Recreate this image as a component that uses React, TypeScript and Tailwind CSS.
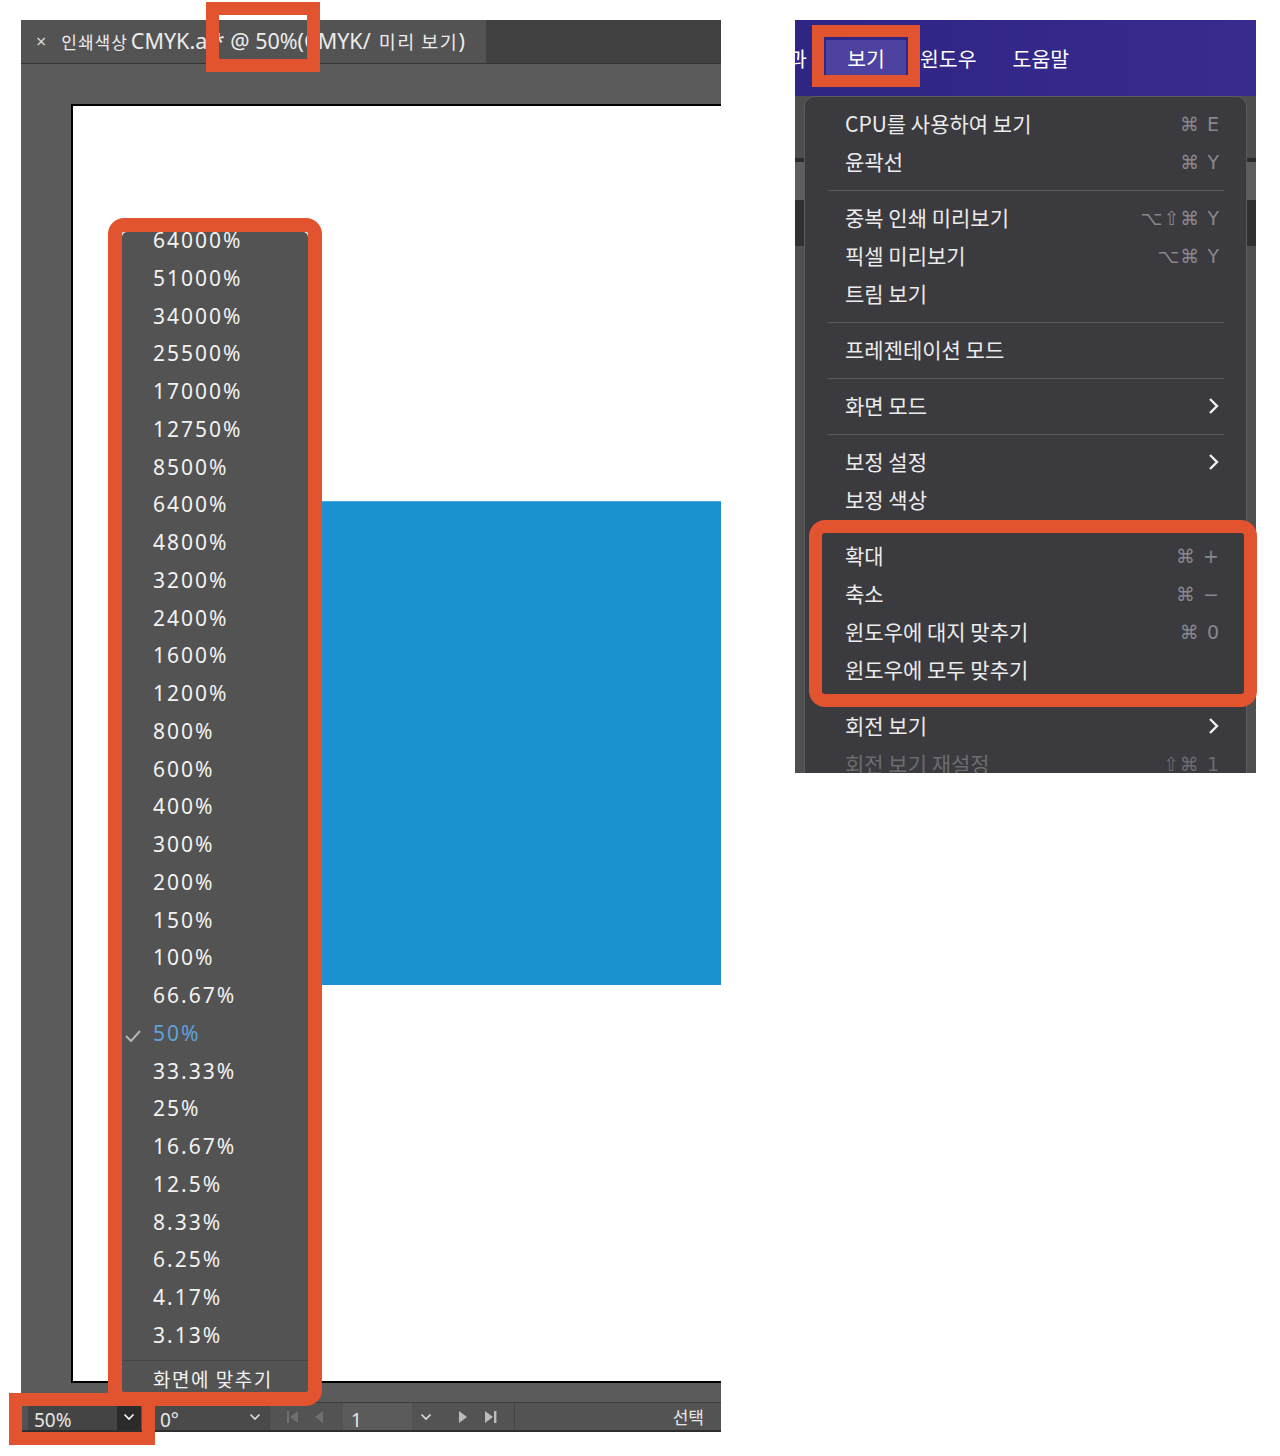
import React from 'react';

const zoomLevels = [
  '64000%', '51000%', '34000%', '25500%', '17000%', '12750%', '8500%', '6400%',
  '4800%', '3200%', '2400%', '1600%', '1200%', '800%', '600%', '400%', '300%',
  '200%', '150%', '100%', '66.67%', '50%', '33.33%', '25%', '16.67%', '12.5%',
  '8.33%', '6.25%', '4.17%', '3.13%',
];

type MenuRow =
  | { sep: true }
  | { label: string; keys?: string; sub?: boolean; disabled?: boolean };

const viewMenu: MenuRow[] = [
  { label: 'CPU를 사용하여 보기', keys: '⌘ E' },
  { label: '윤곽선', keys: '⌘ Y' },
  { sep: true },
  { label: '중복 인쇄 미리보기', keys: '⌥⇧⌘ Y' },
  { label: '픽셀 미리보기', keys: '⌥⌘ Y' },
  { label: '트림 보기' },
  { sep: true },
  { label: '프레젠테이션 모드' },
  { sep: true },
  { label: '화면 모드', sub: true },
  { sep: true },
  { label: '보정 설정', sub: true },
  { label: '보정 색상' },
  { sep: true },
  { label: '확대', keys: '⌘ +' },
  { label: '축소', keys: '⌘ −' },
  { label: '윈도우에 대지 맞추기', keys: '⌘ 0' },
  { label: '윈도우에 모두 맞추기' },
  { sep: true },
  { label: '회전 보기', sub: true },
  { label: '회전 보기 재설정', keys: '⇧⌘ 1', disabled: true },
];

const kr = "font-['Noto_Sans_CJK_KR','Noto_Sans',sans-serif]";
const latin = "font-['Noto_Sans','Noto_Sans_CJK_KR',sans-serif]";

function Chevron({ className = '' }: { className?: string }) {
  return (
    <svg width="12" height="8" viewBox="0 0 12 8" className={className}>
      <polyline points="1.5,1.5 6,6 10.5,1.5" fill="none" stroke="currentColor" strokeWidth="1.6" />
    </svg>
  );
}

function StatusBar() {
  return (
    <div className={`h-[30px] shrink-0 flex items-stretch bg-[#535353] border-t border-[#3d3d3d] border-b-2 border-b-[#2e2e2e] text-[#e6e6e6] text-[19px] ${latin}`}>
      <div className="w-[7px]" />
      <div className="w-[89px] bg-[#444444] flex items-end pl-[6px] leading-[20px] overflow-hidden">50%</div>
      <div className="w-[24px] bg-[#2b2b2b] flex items-center justify-center text-white">
        <Chevron />
      </div>
      <div className="w-[14px]" />
      <div className="w-[85px] bg-[#4a4a4a] flex items-end pl-[5px] leading-[20px] overflow-hidden">0°</div>
      <div className="w-[30px] bg-[#4a4a4a] flex items-center justify-center text-[#e0e0e0]">
        <Chevron />
      </div>
      <div className="w-[73px] flex items-center gap-[14px] pl-[16px] text-[#6f6f6f]">
        <svg width="14" height="14" viewBox="0 0 14 14">
          <rect x="1" y="1" width="2" height="12" fill="currentColor" />
          <polygon points="12,1 12,13 4,7" fill="currentColor" />
        </svg>
        <svg width="10" height="14" viewBox="0 0 10 14">
          <polygon points="9,1 9,13 1,7" fill="currentColor" />
        </svg>
      </div>
      <div className="w-[69px] bg-[#5b5b5b] flex items-end pl-[8px] leading-[20px] overflow-hidden">1</div>
      <div className="w-[28px] flex items-center justify-center text-[#e0e0e0]">
        <Chevron />
      </div>
      <div className="w-[75px] flex items-center gap-[16px] pl-[18px] text-[#bcbcbc] border-r border-[#444]">
        <svg width="10" height="14" viewBox="0 0 10 14">
          <polygon points="1,1 1,13 9,7" fill="currentColor" />
        </svg>
        <svg width="14" height="14" viewBox="0 0 14 14">
          <polygon points="1,1 1,13 9,7" fill="currentColor" />
          <rect x="10" y="1" width="2.4" height="12" fill="currentColor" />
        </svg>
      </div>
      <div className={`flex-1 flex items-center justify-end pr-[17px] text-[17px] ${kr}`}>선택</div>
    </div>
  );
}

function LeftWindow() {
  return (
    <div className="w-[700px] h-[1412px] flex flex-col bg-[#5b5b5b] overflow-hidden">
      <div className="h-[44px] shrink-0 flex bg-[#414141] border-b border-[#363636]">
        <div className={`w-[465px] bg-[#535353] flex items-center pl-[15px] text-[#ececec] whitespace-nowrap ${latin}`}>
          <span className="text-[18px] mr-[15px] text-[#dcdcdc]">×</span>
          <span className={`text-[17px] tracking-[1px] mr-[3px] ${kr}`}>인쇄색상</span>
          <span className="text-[21.5px]">CMYK.ai* @ 50%(CMYK/</span>
          <span className={`text-[18.5px] tracking-[1.5px] ml-[8px] ${kr}`}>미리 보기</span>
          <span className="text-[21.5px]">)</span>
        </div>
      </div>
      <div className="flex-1 min-h-0 pl-[50px] pt-[40px] pb-[19px]">
        <div className="h-full bg-white border-l-2 border-y-2 border-black pt-[395px] pl-[249px]">
          <div className="w-[420px] h-[484px] bg-[#1b92cf] border-t border-[#4aa8dc]" />
        </div>
      </div>
      <StatusBar />
    </div>
  );
}

function ZoomDropdown() {
  return (
    <div className="absolute left-[122px] top-[232px] w-[186px] h-[1161px] rounded-[5px] bg-[#535353] overflow-hidden font-['Noto_Sans',sans-serif]">
      <div className="mt-[-10px]">
        {zoomLevels.map((z) => (
          <div key={z} className="h-[37.76px] flex items-center relative pl-[31px]">
            {z === '50%' && (
              <svg width="18" height="14" viewBox="0 0 18 14" className="absolute left-[2px] top-[14px]">
                <polyline points="2,7 7,12 16,2" fill="none" stroke="#b4b4b4" strokeWidth="2" />
              </svg>
            )}
            <span className={`text-[21px] tracking-[2px] ${z === '50%' ? 'text-[#5ea2dc]' : 'text-[#f2f2f2]'}`}>{z}</span>
          </div>
        ))}
      </div>
      <div className="h-[6px] border-b border-[#474747]" />
      <div className={`h-[38px] flex items-center pl-[31px] text-[19px] tracking-[1.5px] text-[#f2f2f2] ${kr}`}>
        화면에 맞추기
      </div>
    </div>
  );
}

function RightWindow() {
  return (
    <div className={`w-[461px] h-[753px] flex flex-col overflow-hidden ${kr}`}>
      <div className="h-[76px] shrink-0 flex items-center bg-[linear-gradient(to_right,#2f2584,#372b8e)] text-white text-[20.5px] whitespace-nowrap">
        <span className="ml-[-7px] w-[38px]">과</span>
        <div className="w-[80px] h-[36px] bg-[#4d42a0] flex items-center justify-center">보기</div>
        <span className="ml-[14px]">윈도우</span>
        <span className="ml-[36px]">도움말</span>
      </div>
      <div className="flex-1 min-h-0 px-[9px] bg-[linear-gradient(to_bottom,#4d4d4d_0px,#4d4d4d_62px,#2c2c2c_62px,#2c2c2c_66px,#5d5d5d_66px,#5d5d5d_104px,#303030_104px,#303030_150px,#4f4f4f_150px)]">
        <div className="h-full overflow-hidden rounded-t-[10px] border border-b-0 border-[#5c5c60] bg-[#3b3a3f] pt-[8px] text-[21px]">
          {viewMenu.map((row, i) =>
            'sep' in row ? (
              <div key={i} className="h-[18px] flex items-center pl-[23px] pr-[22px]">
                <div className="h-px w-full bg-[#5b5b60]" />
              </div>
            ) : (
              <div key={i} className="h-[38px] flex items-center justify-between pl-[40px] pr-[26px]">
                <span className={row.disabled ? 'text-[#6c6c70]' : 'text-[#ececec]'}>{row.label}</span>
                {row.keys && (
                  <span className={`font-['DejaVu_Sans','Noto_Sans',sans-serif] text-[19px] tracking-[1px] ${row.disabled ? 'text-[#6c6c70]' : 'text-[#88888c]'}`}>
                    {row.keys}
                  </span>
                )}
                {row.sub && (
                  <svg width="12" height="18" viewBox="0 0 12 18">
                    <polyline points="2,2 9,9 2,16" fill="none" stroke="#f0f0f0" strokeWidth="2.4" />
                  </svg>
                )}
              </div>
            )
          )}
        </div>
      </div>
    </div>
  );
}

export default function App() {
  return (
    <div className="relative w-[1280px] h-[1456px] bg-white overflow-hidden">
      <div className="flex items-start pt-[20px] pl-[21px] gap-[74px]">
        <LeftWindow />
        <RightWindow />
      </div>

      {/* zoom popup over the canvas */}
      <ZoomDropdown />

      {/* red annotation frames */}
      <div className="absolute left-[206px] top-[2px] w-[114px] h-[70px] border-[13px] border-[#e2532f]" />
      <div className="absolute left-[108px] top-[218px] w-[214px] h-[1188px] border-[14px] border-[#e2532f] rounded-[16px]" />
      <div className="absolute left-[9px] top-[1393px] w-[146px] h-[52px] border-[13px] border-[#e2532f]" />
      <div className="absolute left-[812px] top-[25px] w-[108px] h-[62px] border-[12px] border-[#e2532f]" />
      <div className="absolute left-[809px] top-[520px] w-[448px] h-[187px] border-[13px] border-[#e2532f] rounded-[16px]" />
    </div>
  );
}
